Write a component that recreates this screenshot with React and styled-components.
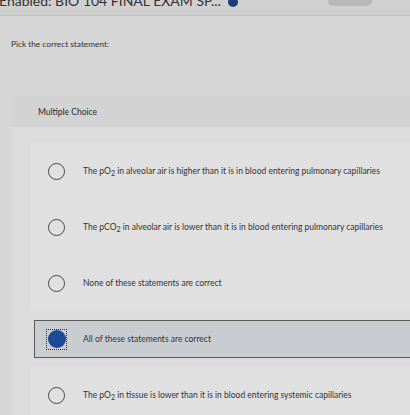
import styled, { createGlobalStyle } from "styled-components";

const GlobalStyle = createGlobalStyle`
  html, body {
    margin: 0;
    padding: 0;
    background: #d4d4d4;
  }
  body {
    font-family: Lato, "Open Sans", sans-serif;
    color: #2a2a2a;
  }
`;

const Page = styled.div`
  width: 410px;
  height: 415px;
  overflow: hidden;
  background: #d6d6d6;
`;

const TopBar = styled.div`
  height: 15px;
  border-bottom: 1px solid #c2c2c2;
  background: #d0d0d0;
  display: flex;
  align-items: flex-end;
  overflow: hidden;
  position: relative;
`;

const Title = styled.div`
  font-size: 14px;
  line-height: 14px;
  color: #333;
  white-space: nowrap;
  margin-bottom: 7px;
  margin-left: -1px;
  display: flex;
  align-items: center;
  gap: 7px;
`;

const InfoDot = styled.span`
  width: 10px;
  height: 10px;
  border-radius: 50%;
  background: #1d3d78;
  display: inline-block;
  margin-top: 2px;
`;

const TopButton = styled.div`
  position: absolute;
  top: -6px;
  left: 328px;
  width: 44px;
  height: 12px;
  border-radius: 5px;
  background: #b9b9b9;
`;

const Prompt = styled.div`
  padding: 23px 0 0 11px;
  height: 57px;
  box-sizing: border-box;
  font-size: 8.3px;
  color: #333;
`;

const Panel = styled.div`
  margin: 23px 0 0 12px;
  background: #dcdcdc;
`;

const PanelHeader = styled.div`
  height: 31px;
  padding-left: 26px;
  display: flex;
  align-items: center;
  background: #d3d3d3;
  font-size: 8.5px;
  color: #2a2a2a;
`;

const PanelBody = styled.div`
  padding: 16px 0 0 18px;
`;

const Row = styled.div`
  height: 56px;
  display: flex;
  align-items: center;
  background: ${({ $light }) => ($light ? "#e0e0e0" : "transparent")};
`;

const Choice = styled.label`
  flex: 1;
  height: 38px;
  margin-left: 4px;
  display: flex;
  align-items: center;
  box-sizing: border-box;
  padding-left: ${({ $selected }) => ($selected ? "13px" : "14px")};
  border: ${({ $selected }) => ($selected ? "1px solid #5a5a5a" : "none")};
  border-right: none;
  background: ${({ $selected }) => ($selected ? "#c9cdd1" : "transparent")};
  font-size: 8.5px;
  color: #333;
  white-space: nowrap;
`;

const Radio = styled.span`
  flex: none;
  width: 17px;
  height: 17px;
  box-sizing: border-box;
  border-radius: 50%;
  border: 1px solid #444;
  margin-right: 18px;
  background: transparent;
`;

const FocusRing = styled.span`
  flex: none;
  width: 21px;
  height: 21px;
  box-sizing: border-box;
  margin: 0 16px 0 -2px;
  border: 1px dotted #333;
  display: flex;
  align-items: center;
  justify-content: center;
`;

const Filled = styled.span`
  width: 18px;
  height: 18px;
  border-radius: 50%;
  background: #1c4a94;
`;

const Label = styled.span`
  sub {
    font-size: 7px;
    vertical-align: -1.5px;
    line-height: 0;
  }
`;

const options = [
  { text: <>The pO<sub>2</sub> in alveolar air is higher than it is in blood entering pulmonary capillaries</> },
  { text: <>The pCO<sub>2</sub> in alveolar air is lower than it is in blood entering pulmonary capillaries</> },
  { text: "None of these statements are correct" },
  { text: "All of these statements are correct", selected: true },
  { text: <>The pO<sub>2</sub> in tissue is lower than it is in blood entering systemic capillaries</> },
];

export default function App() {
  return (
    <Page>
      <GlobalStyle />
      <TopBar>
        <Title>
          Enabled: BIO 104 FINAL EXAM SP...
          <InfoDot />
        </Title>
        <TopButton />
      </TopBar>
      <Prompt>Pick the correct statement:</Prompt>
      <Panel>
        <PanelHeader>Multiple Choice</PanelHeader>
        <PanelBody>
          {options.map((o, i) => (
            <Row key={i} $light={!o.selected}>
              <Choice $selected={o.selected}>
                {o.selected ? (
                  <FocusRing>
                    <Filled />
                  </FocusRing>
                ) : (
                  <Radio />
                )}
                <Label>{o.text}</Label>
              </Choice>
            </Row>
          ))}
        </PanelBody>
      </Panel>
    </Page>
  );
}
